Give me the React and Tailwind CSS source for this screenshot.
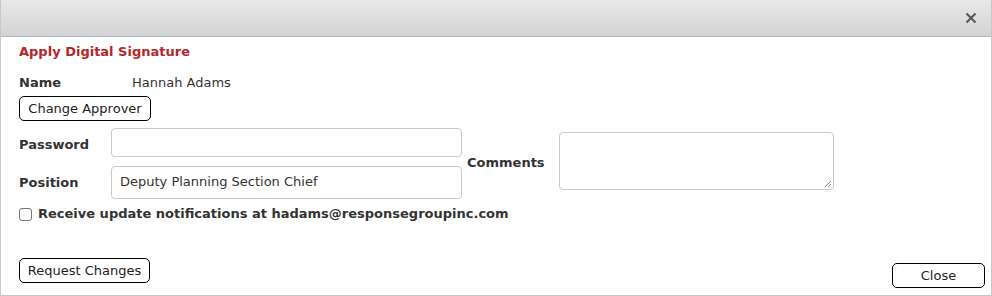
import React from "react";

export default function App() {
  const font = { fontFamily: '"DejaVu Sans", Verdana, sans-serif' };
  return (
    <div className="w-[992px] h-[296px] bg-white text-[13px] text-[#333]" style={font}>
      <div className="h-[296px] border border-[#c8c8c8] border-t-0 flex flex-col">
        <div className="h-[37px] bg-gradient-to-b from-[#e8e8e8] to-[#d3d3d3] border-b border-[#a7b3c6] flex items-center justify-end pr-[14px]">
          <svg width="12" height="12" viewBox="0 0 12 12">
            <path d="M1.5 1.5 L10.5 10.5 M10.5 1.5 L1.5 10.5" stroke="#555" strokeWidth="2" />
          </svg>
        </div>
        <div className="flex-1 relative pl-[18px] pr-[6px]">
          <div className="mt-[7px] font-bold text-[#b3262a] leading-[16px]">Apply Digital Signature</div>
          <div className="flex mt-[15px] leading-[16px]">
            <div className="w-[113px] font-bold">Name</div>
            <div>Hannah Adams</div>
          </div>
          <button className="mt-[5px] h-[25px] w-[132px] border border-black rounded-[5px] bg-white text-[13px] text-[#222] leading-none">
            Change Approver
          </button>
          <div className="flex mt-[7px]">
            <div className="flex flex-col">
              <div className="flex items-center h-[29px]">
                <div className="w-[92px] font-bold mt-[5px]">Password</div>
                <div className="w-[351px] h-[29px] border border-[#c9c9c9] rounded-[4px]"></div>
              </div>
              <div className="flex items-center h-[33px] mt-[9px]">
                <div className="w-[92px] font-bold self-end mb-[7px]">Position</div>
                <div className="w-[351px] h-[33px] border border-[#c9c9c9] rounded-[4px] pl-[8px] pt-[5px] text-[#333]">
                  Deputy Planning Section Chief
                </div>
              </div>
            </div>
            <div className="flex items-center ml-[5px] h-[71px]">
              <div className="w-[92px] font-bold mt-[-2px]">Comments</div>
              <div className="w-[275px] h-[58px] border border-[#c9c9c9] rounded-[4px] relative mt-[-5px]">
                <svg className="absolute right-[2px] bottom-[2px]" width="7" height="7" viewBox="0 0 7 7">
                  <path d="M1 7 L7 1 M4 7 L7 4" stroke="#888" strokeWidth="1" />
                </svg>
              </div>
            </div>
          </div>
          <div className="flex items-center mt-[7px]">
            <div className="w-[13px] h-[13px] border border-[#767676] rounded-[3px] bg-white"></div>
            <div className="ml-[6px] font-bold leading-[16px] text-[#333]">
              Receive update notifications at hadams@responsegroupinc.com
            </div>
          </div>
          <button className="absolute left-[18px] top-[221px] h-[25px] w-[131px] border border-black rounded-[5px] bg-white text-[13px] text-[#222] leading-none">
            Request Changes
          </button>
          <button className="absolute right-[6px] top-[226px] h-[25px] w-[93px] border border-black rounded-[5px] bg-white text-[13px] text-[#222] leading-none">
            Close
          </button>
        </div>
      </div>
    </div>
  );
}
